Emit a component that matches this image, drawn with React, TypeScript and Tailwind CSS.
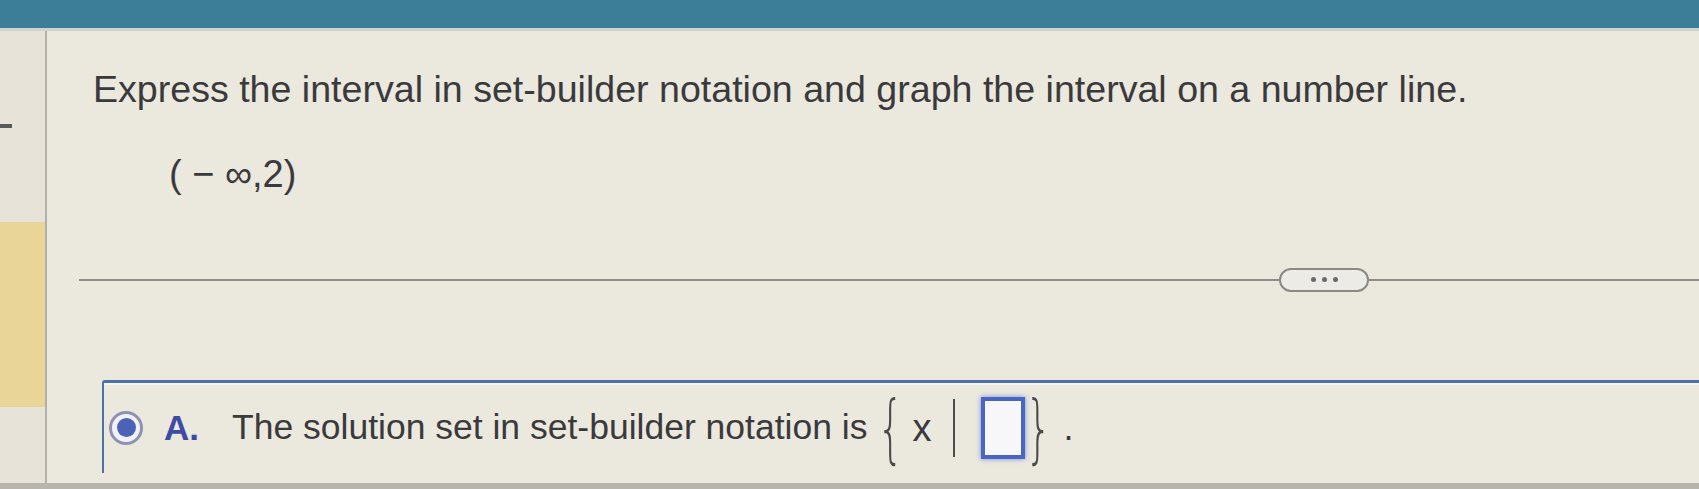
import { FC } from "react";

const Radio: FC = () => (
  <div className="w-[34px] h-[34px] rounded-full border-[3px] border-[#8d91b4] bg-[#f2f1f5] flex items-center justify-center shrink-0">
    <div className="w-[19px] h-[19px] rounded-full bg-[#4b62b6]" />
  </div>
);

const Brace: FC<{ ch: string }> = ({ ch }) => (
  <span className="inline-block text-[52px] leading-none font-['DejaVu_Sans',sans-serif] font-extralight text-[#4a4a4a] scale-y-[1.45] scale-x-[0.8]">
    {ch}
  </span>
);

const App: FC = () => {
  return (
    <div className="w-full h-[489px] flex flex-col overflow-hidden bg-[#ebe8de] text-[#3a3a3d] font-['Liberation_Sans',Arial,sans-serif]">
      <div className="h-[28px] bg-[#3c7e98] shrink-0" />
      <div className="h-[3px] bg-[#cdd5d2] shrink-0" />
      <div className="flex flex-1 min-h-0">
        <div className="w-[47px] shrink-0 flex flex-col bg-[#e7e3d8] border-r-2 border-[#b2b0a8]">
          <div className="h-[93px]" />
          <div className="h-[4px] w-[12px] bg-[#5a5a5a]" />
          <div className="h-[94px]" />
          <div className="h-[185px] bg-[#e9d598]" />
        </div>
        <div className="flex-1 flex flex-col">
          <h1 className="ml-[46px] mt-[40px] text-[37.6px] leading-none font-normal whitespace-nowrap">
            Express the interval in set-builder notation and graph the interval on a number line.
          </h1>
          <div className="ml-[122px] mt-[46px] text-[38px] leading-none whitespace-nowrap">
            ( − ∞,2)
          </div>
          <div className="mt-[75px] ml-[32px] flex items-center">
            <div className="flex-1 h-[2px] bg-[#8f8e8a]" />
            <div className="w-[90px] h-[24px] rounded-full border-2 border-[#8a8985] bg-[#ecebe6] flex items-center justify-center gap-[6px]">
              <span className="w-[5px] h-[5px] rounded-full bg-[#6a6a6a]" />
              <span className="w-[5px] h-[5px] rounded-full bg-[#6a6a6a]" />
              <span className="w-[5px] h-[5px] rounded-full bg-[#6a6a6a]" />
            </div>
            <div className="flex-1 h-[2px] bg-[#8f8e8a] max-w-[330px]" />
          </div>
          <div className="mt-[88px] ml-[55px] mb-[10px] flex-1 border-t-[3px] border-l-2 border-[#4e72a8] rounded-tl-[3px]">
            <div className="h-[2px] bg-[#f6f5f0]" />
            <div className="flex items-center pl-[5px] pt-[12px]">
              <Radio />
              <span className="ml-[21px] text-[35px] font-bold text-[#3d4ba4] leading-none">A.</span>
              <span className="ml-[33px] text-[35.5px] leading-none whitespace-nowrap">
                The solution set in set-builder notation is
              </span>
              <span className="ml-[7px]">
                <Brace ch="{" />
              </span>
              <span className="ml-[5px] text-[38px] leading-none">x</span>
              <span className="ml-[21px] w-[2px] h-[58px] bg-[#4d4d4d]" />
              <span className="ml-[26px] w-[44px] h-[62px] bg-[#f7f7fa] border-[4px] border-[#4a66c2] shadow-[0_0_5px_#7a8fd8]" />
              <span className="-ml-[3px]">
                <Brace ch="}" />
              </span>
              <span className="ml-[9px] text-[36px] leading-none">.</span>
            </div>
          </div>
        </div>
      </div>
      <div className="h-[6px] bg-[#b7b5ad] shrink-0" />
    </div>
  );
};

export default App;
